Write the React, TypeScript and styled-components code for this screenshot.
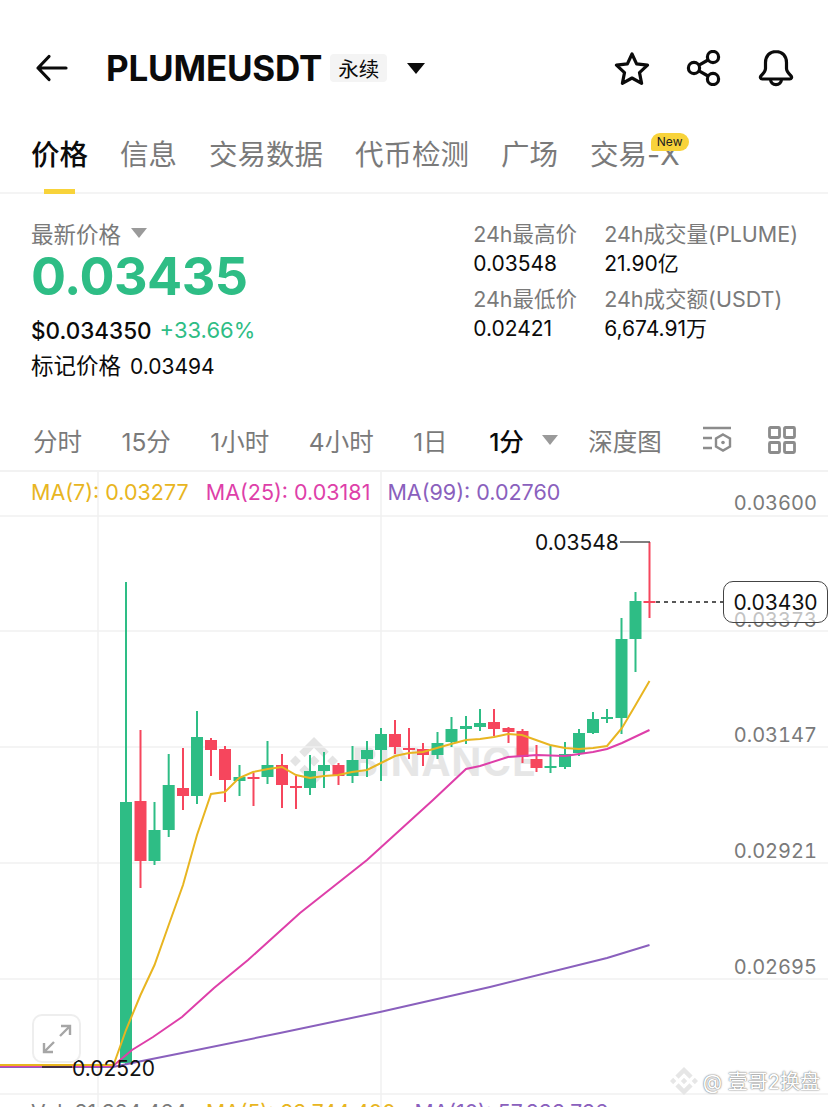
import { FC } from 'react'
import styled, { createGlobalStyle } from 'styled-components'

const GlobalStyle = createGlobalStyle`
  html, body {
    margin: 0;
    padding: 0;
    background: #fff;
  }
  * {
    box-sizing: border-box;
  }
`

const GREEN = '#2ebd85'
const RED = '#f6465d'
const YELLOW = '#e8b521'
const PINK = '#de3fa9'
const PURPLE = '#8a60bd'
const GREY = '#7a7a7a'
const FONT = `Inter, "Noto Sans CJK SC", "Noto Sans", sans-serif`

// x, high, bodyTop, bodyBottom, low, up
const candles: [number, number, number, number, number, boolean][] = [
  [126, 582, 802, 1063, 1064, true],
  [140.5, 730, 801, 861, 888, false],
  [154.5, 802, 830, 861, 865, true],
  [168.7, 754, 785, 830, 837, true],
  [183, 748, 788, 796, 810, false],
  [197, 711, 737, 796, 804, true],
  [211, 738, 740, 750, 776, false],
  [225, 746, 749, 780, 802, false],
  [239.5, 765, 777, 781, 796, true],
  [253.5, 773, 777, 779, 806, false],
  [267.5, 741, 765, 777, 784, true],
  [282, 754, 765, 785, 808, false],
  [296, 776, 786, 788, 809, false],
  [310, 755, 771, 788, 795, true],
  [324, 752, 765, 771, 788, true],
  [338.5, 763, 765, 776, 785, false],
  [352.5, 746, 760, 776, 783, true],
  [367, 741, 750, 759, 777, true],
  [381, 728, 734, 750, 781, true],
  [395, 720, 734, 747, 754, false],
  [409, 728, 748, 750, 759, false],
  [423, 743, 749, 755, 766, false],
  [437.5, 732, 743, 755, 759, true],
  [451.5, 717, 729, 742, 747, true],
  [466, 716, 726, 729, 744, true],
  [480, 709, 723, 727, 731, true],
  [494, 709, 722, 729, 736, false],
  [508.5, 727, 728, 732, 743, false],
  [522.5, 729, 731, 757, 763, false],
  [536.5, 745, 759, 768, 772, false],
  [550.5, 746, 766, 768, 773, true],
  [565, 742, 754, 767, 769, true],
  [579, 729, 733, 753, 756, true],
  [593, 712, 719, 733, 734, true],
  [607, 709, 717, 719, 723, true],
  [621.5, 618, 639, 718, 734, true],
  [635.5, 592, 601, 639, 672, true],
  [649.5, 542, 601, 603, 618, false]
]

const maYellow =
  '0,1065 113.5,1065 126,1030 140.5,995 154.5,965 168.7,925 183,885 197,835 211,794 225,792 239,778 253,772 268,769 282,767 296,775 310,778 324,776 338,775 352,772 367,770 381,763 395,756 409,753 423,752 437,748 451,744 466,740 480,739 494,737 508,734 522,735 536,740 550,745 565,748 579,749 593,748 607,746 622,728 635,706 649.5,681'
const maPink =
  '0,1066 113,1066 132,1050 153,1037 182,1017 214,988 248,960 300,913 367,860 400,830 433,800 466,769 480,766 508,757 537,755 565,756 593,752 607,749 622,743 649.5,730'
const maPurple = '0,1067 113,1067 132,1063 182,1053 280,1033 380,1012 490,987 607,958 649.5,945'

const intervals = ['分时', '15分', '1小时', '4小时', '1日']
const tabs = ['价格', '信息', '交易数据', '代币检测', '广场', '交易-X']
const gridRows = [516, 631, 747, 863, 979, 1094]
const axisLabels = [
  { text: '0.03600', y: 503 },
  { text: '0.03373', y: 620 },
  { text: '0.03147', y: 735 },
  { text: '0.02921', y: 851 },
  { text: '0.02695', y: 967 }
]

const CHART_TOP = 472

const BinanceMark: FC<{ size: number; color: string }> = ({ size, color }) => (
  <svg width={size} height={size} viewBox="0 0 126.61 126.61" fill={color}>
    <path d="M38.73 53.2l24.59-24.58 24.6 24.6 14.3-14.31L63.32 0 24.42 38.9l14.31 14.3zM0 63.31l14.3-14.31 14.31 14.31-14.31 14.3zM38.73 73.41l24.59 24.59 24.6-24.6 14.31 14.29-38.9 38.91-38.91-38.88-.02-.02zM98 63.31l14.3-14.31 14.31 14.3-14.31 14.32zM77.83 63.3L63.32 48.78 52.59 59.51l-1.24 1.23-2.54 2.54 14.51 14.5 14.51-14.47z" />
  </svg>
)

const App: FC = () => {
  return (
    <Page>
      <GlobalStyle />
      <TopBar>
        <BackButton>
          <svg width="34" height="30" viewBox="0 0 34 30" fill="none" stroke="#0b0b0b" strokeWidth="3.2" strokeLinecap="round" strokeLinejoin="round">
            <path d="M31 15H3M14 3.5 3 15l11 11.5" />
          </svg>
        </BackButton>
        <Symbol>PLUMEUSDT</Symbol>
        <SymbolTag>永续</SymbolTag>
        <SymbolCaret $size={9} $color="#0b0b0b" />
        <TopActions>
          <svg width="36" height="34" viewBox="0 0 36 34" fill="none" stroke="#0b0b0b" strokeWidth="3.2" strokeLinejoin="round">
            <path d="M18 3l4.6 9.9 10.9 1.3-8 7.4 2.1 10.7L18 27l-9.6 5.3 2.1-10.7-8-7.4 10.9-1.3z" />
          </svg>
          <svg width="36" height="36" viewBox="0 0 36 36" fill="none" stroke="#0b0b0b" strokeWidth="3.2">
            <circle cx="8" cy="18" r="5.6" />
            <circle cx="27" cy="7" r="5.6" />
            <circle cx="27" cy="29" r="5.6" />
            <path d="M13 15.2 22 10M13 20.8 22 26" />
          </svg>
          <svg width="36" height="38" viewBox="0 0 36 38" fill="none" stroke="#0b0b0b" strokeWidth="3.2" strokeLinejoin="round">
            <path d="M18 2.5c-6.5 0-10.5 4.8-10.5 11v6c0 3-2.2 5-4.6 7.5-1 1.2-.4 3 1.3 3h27.6c1.700 0 2.300-1.800 1.300-3-2.400-2.500-4.600-4.500-4.600-7.500v-6c0-6.200-4-11-10.500-11z" />
            <path d="M12.500 30c0 3.400 2.400 5.600 5.500 5.600s5.500-2.200 5.500-5.600" />
          </svg>
        </TopActions>
      </TopBar>

      <TabBar>
        {tabs.map((tab, i) => (
          <TabItem key={tab} $active={i === 0}>
            {tab}
            {tab === '交易-X' && <NewBadge>New</NewBadge>}
          </TabItem>
        ))}
      </TabBar>

      <Summary>
        <PriceColumn>
          <LatestLabel>
            最新价格
            <Caret $size={8} $color="#9a9a9a" />
          </LatestLabel>
          <BigPrice>0.03435</BigPrice>
          <FiatRow>
            <FiatPrice>$0.034350</FiatPrice>
            <Change>+33.66%</Change>
          </FiatRow>
          <MarkPrice>
            标记价格
            <MarkValue>0.03494</MarkValue>
          </MarkPrice>
        </PriceColumn>
        <StatGrid>
          <Stat>
            <StatLabel>24h最高价</StatLabel>
            <StatValue>0.03548</StatValue>
          </Stat>
          <Stat>
            <StatLabel>24h成交量(PLUME)</StatLabel>
            <StatValue>21.90亿</StatValue>
          </Stat>
          <Stat>
            <StatLabel>24h最低价</StatLabel>
            <StatValue>0.02421</StatValue>
          </Stat>
          <Stat>
            <StatLabel>24h成交额(USDT)</StatLabel>
            <StatValue>6,674.91万</StatValue>
          </Stat>
        </StatGrid>
      </Summary>

      <IntervalBar>
        {intervals.map((item) => (
          <Interval key={item}>{item}</Interval>
        ))}
        <ActiveInterval>
          1分
          <Caret $size={8} $color="#9a9a9a" />
        </ActiveInterval>
        <Interval>深度图</Interval>
        <IntervalIcons>
          <svg width="30" height="28" viewBox="0 0 30 28" fill="none" stroke="#8c8c8c" strokeWidth="2.400">
            <path d="M1 2h28M1 12h9M1 22h9" />
            <path d="M21 8.500l7 4v8l-7 4-7-4v-8z" />
            <circle cx="21" cy="16.500" r="1.800" fill="#8c8c8c" stroke="none" />
          </svg>
          <svg width="28" height="28" viewBox="0 0 28 28" fill="none" stroke="#8c8c8c" strokeWidth="2.800">
            <rect x="1.500" y="1.500" width="10" height="10" rx="1" />
            <rect x="16.500" y="1.500" width="10" height="10" rx="1" />
            <rect x="1.500" y="16.500" width="10" height="10" rx="1" />
            <rect x="16.500" y="16.500" width="10" height="10" rx="1" />
          </svg>
        </IntervalIcons>
      </IntervalBar>

      <Chart>
        <Watermark>
          <BinanceMark size={48} color="#e4e4e4" />
          <WatermarkText>BINANCE</WatermarkText>
        </Watermark>
        <ChartSvg viewBox={`0 ${CHART_TOP} 828 635`} width="828" height="635">
          {gridRows.map((y) => (
            <line key={y} x1="0" x2="828" y1={y} y2={y} stroke="#f0f0f0" strokeWidth="1.500" />
          ))}
          <line x1="98" x2="98" y1={CHART_TOP} y2="1107" stroke="#f0f0f0" strokeWidth="1.500" />
          <line x1="381" x2="381" y1={CHART_TOP} y2="1107" stroke="#f0f0f0" strokeWidth="1.500" />
          {candles.map(([x, high, top, bottom, low, up]) => {
            const color = up ? GREEN : RED
            return (
              <g key={x} fill={color}>
                <rect x={x - 1} y={high} width="2" height={low - high} />
                <rect x={x - 6} y={top} width="12" height={bottom - top} />
              </g>
            )
          })}
          <polyline points={maPurple} fill="none" stroke={PURPLE} strokeWidth="2" />
          <polyline points={maPink} fill="none" stroke={PINK} strokeWidth="2" />
          <polyline points={maYellow} fill="none" stroke={YELLOW} strokeWidth="2" />
          <path d="M620 542H650" stroke="#555" strokeWidth="1.500" fill="none" />
          <path d="M42 1067H72" stroke="#222" strokeWidth="1.500" fill="none" />
          <path d="M656 602H724" stroke="#222" strokeWidth="1.500" strokeDasharray="4 4" fill="none" />
        </ChartSvg>

        <MaLegend>
          <MaText $color={YELLOW}>MA(7): 0.03277</MaText>
          <MaText $color={PINK}>MA(25): 0.03181</MaText>
          <MaText $color={PURPLE}>MA(99): 0.02760</MaText>
        </MaLegend>

        {axisLabels.map((label) => (
          <AxisLabel key={label.text} $y={label.y - CHART_TOP}>
            {label.text}
          </AxisLabel>
        ))}
        <LastPrice>0.03430</LastPrice>
        <HighLabel>0.03548</HighLabel>
        <LowLabel>0.02520</LowLabel>

        <ExpandButton>
          <svg width="30" height="30" viewBox="0 0 30 30" fill="none" stroke="#a6a6a6" strokeWidth="2.400">
            <path d="M18 12 28 2M19 2h9v9M12 18 2 28M2 19v9h9" />
          </svg>
        </ExpandButton>

        <AuthorMark>
          <BinanceMark size={28} color="#e6e6e6" />
          <AuthorText>@ 壹哥2换盘</AuthorText>
        </AuthorMark>

        <VolLegend>
          <VolText $color={GREY}>Vol: 81,324,464</VolText>
          <VolText $color={YELLOW}>MA(5): 83,744,400</VolText>
          <VolText $color={PURPLE}>MA(10): 57,833,736</VolText>
        </VolLegend>
      </Chart>
    </Page>
  )
}

const Page = styled.div`
  width: 828px;
  height: 1107px;
  overflow: hidden;
  display: flex;
  flex-direction: column;
  background: #fff;
  color: #0b0b0b;
  font-family: ${FONT};
`

const TopBar = styled.div`
  height: 112px;
  padding: 24px 34px 0 35px;
  display: flex;
  align-items: center;
`

const BackButton = styled.div`
  width: 71px;
  display: flex;
`

const Symbol = styled.div`
  font-size: 35px;
  font-weight: 700;
  letter-spacing: -0.2px;
`

const SymbolTag = styled.div`
  margin-left: 8px;
  height: 28px;
  padding: 0 8px;
  display: flex;
  align-items: center;
  background: #f4f4f4;
  border-radius: 4px;
  font-size: 20.500px;
`

const Caret = styled.span<{ $size: number; $color: string }>`
  display: inline-block;
  width: 0;
  height: 0;
  border-left: ${({ $size }) => $size}px solid transparent;
  border-right: ${({ $size }) => $size}px solid transparent;
  border-top: ${({ $size }) => Math.round($size * 1.2)}px solid ${({ $color }) => $color};
`

const SymbolCaret = styled(Caret)`
  margin-left: 20px;
`

const TopActions = styled.div`
  margin-left: auto;
  display: flex;
  align-items: center;
  gap: 36px;
`

const TabBar = styled.div`
  height: 82px;
  padding: 6px 31px 0;
  display: flex;
  align-items: center;
  gap: 32px;
  border-bottom: 2px solid #f4f4f4;
`

const TabItem = styled.div<{ $active: boolean }>`
  position: relative;
  font-size: 28.500px;
  line-height: 40px;
  color: ${({ $active }) => ($active ? '#0b0b0b' : GREY)};
  font-weight: ${({ $active }) => ($active ? 500 : 400)};
  &::after {
    content: '';
    display: ${({ $active }) => ($active ? 'block' : 'none')};
    position: absolute;
    left: 13px;
    right: 13px;
    top: 54px;
    height: 5px;
    background: #f8d33a;
  }
`

const NewBadge = styled.span`
  position: absolute;
  right: -9px;
  top: -2px;
  width: 38px;
  height: 18px;
  border-radius: 9px 9px 9px 2px;
  background: #f8d33a;
  color: #222;
  font-size: 12px;
  line-height: 18px;
  text-align: center;
  font-weight: 400;
`

const Summary = styled.div`
  height: 224px;
  padding: 24px 30px 0 31px;
  display: flex;
  justify-content: space-between;
`

const PriceColumn = styled.div`
  display: flex;
  flex-direction: column;
`

const LatestLabel = styled.div`
  height: 30px;
  display: flex;
  align-items: center;
  gap: 10px;
  font-size: 22.500px;
  color: ${GREY};
`

const BigPrice = styled.div`
  margin-top: 3px;
  height: 52px;
  line-height: 52px;
  font-size: 52px;
  font-weight: 700;
  color: ${GREEN};
  letter-spacing: -0.5px;
`

const FiatRow = styled.div`
  margin-top: 11px;
  height: 32px;
  display: flex;
  align-items: center;
  gap: 8px;
  font-size: 22.500px;
`

const FiatPrice = styled.span`
  font-weight: 500;
`

const Change = styled.span`
  color: ${GREEN};
  font-size: 22px;
`

const MarkPrice = styled.div`
  margin-top: 4px;
  height: 32px;
  line-height: 32px;
  font-size: 22.500px;
`

const MarkValue = styled.span`
  margin-left: 9px;
  font-size: 21px;
`

const StatGrid = styled.div`
  margin-top: 2px;
  display: grid;
  grid-template-columns: 131px auto;
  grid-auto-rows: 65px;
  align-content: start;
`

const Stat = styled.div`
  display: flex;
  flex-direction: column;
`

const StatLabel = styled.div`
  height: 29px;
  line-height: 29px;
  font-size: 21.500px;
  color: ${GREY};
  white-space: nowrap;
`

const StatValue = styled.div`
  height: 29px;
  line-height: 29px;
  font-size: 21px;
  white-space: nowrap;
`

const IntervalBar = styled.div`
  height: 54px;
  padding: 0 32px 8px 33px;
  display: flex;
  align-items: center;
  gap: 39.500px;
  border-bottom: 2px solid #f2f2f2;
`

const Interval = styled.div`
  font-size: 24.500px;
  color: ${GREY};
  white-space: nowrap;
`

const ActiveInterval = styled(Interval)`
  display: flex;
  align-items: center;
  gap: 18px;
  font-weight: 500;
  color: #0b0b0b;
  margin-left: 2px;
  margin-right: -9px;
`

const IntervalIcons = styled.div`
  margin-left: auto;
  display: flex;
  align-items: center;
  gap: 36px;
`

const Chart = styled.div`
  position: relative;
  flex: 1;
  overflow: hidden;
`

const ChartSvg = styled.svg`
  position: relative;
  display: block;
`

const Watermark = styled.div`
  position: absolute;
  left: 290px;
  top: 265px;
  display: flex;
  align-items: center;
  gap: 14px;
`

const WatermarkText = styled.div`
  font-size: 39px;
  font-weight: 700;
  letter-spacing: 1px;
  color: #e6e6e6;
`

const MaLegend = styled.div`
  position: absolute;
  left: 31px;
  top: 5px;
  display: flex;
  gap: 17px;
`

const VolLegend = styled.div`
  position: absolute;
  left: 31px;
  top: 625px;
  display: flex;
  gap: 19px;
`

const MaText = styled.span<{ $color: string }>`
  font-size: 21.500px;
  line-height: 30px;
  color: ${({ $color }) => $color};
  white-space: nowrap;
`

const VolText = styled(MaText)`
  font-size: 21.200px;
`

const AxisLabel = styled.div<{ $y: number }>`
  position: absolute;
  right: 11px;
  top: ${({ $y }) => $y - 15}px;
  font-size: 20px;
  line-height: 30px;
  font-variant-numeric: tabular-nums;
  color: ${GREY};
`

const LastPrice = styled.div`
  position: absolute;
  left: 723px;
  top: 109px;
  width: 105px;
  height: 42px;
  border: 1.500px solid #444;
  border-radius: 10px;
  background: rgba(255, 255, 255, 0.55);
  display: flex;
  align-items: center;
  justify-content: center;
  font-size: 21px;
  color: #111;
`

const HighLabel = styled.div`
  position: absolute;
  left: 535px;
  top: 56px;
  font-size: 21px;
  line-height: 30px;
  color: #111;
`

const LowLabel = styled.div`
  position: absolute;
  left: 72px;
  top: 582px;
  font-size: 21px;
  line-height: 30px;
  color: #111;
`

const ExpandButton = styled.div`
  position: absolute;
  left: 32px;
  top: 542px;
  width: 49px;
  height: 49px;
  border: 2px solid #eeeeee;
  border-radius: 10px;
  background: rgba(255, 255, 255, 0.8);
  display: flex;
  align-items: center;
  justify-content: center;
`

const AuthorMark = styled.div`
  position: absolute;
  right: 8px;
  top: 594px;
  display: flex;
  align-items: center;
  gap: 5px;
`

const AuthorText = styled.div`
  font-size: 20px;
  color: #fff;
  text-shadow: 0 0 2px #777, 0 0 1px #777;
  white-space: nowrap;
`

export default App
